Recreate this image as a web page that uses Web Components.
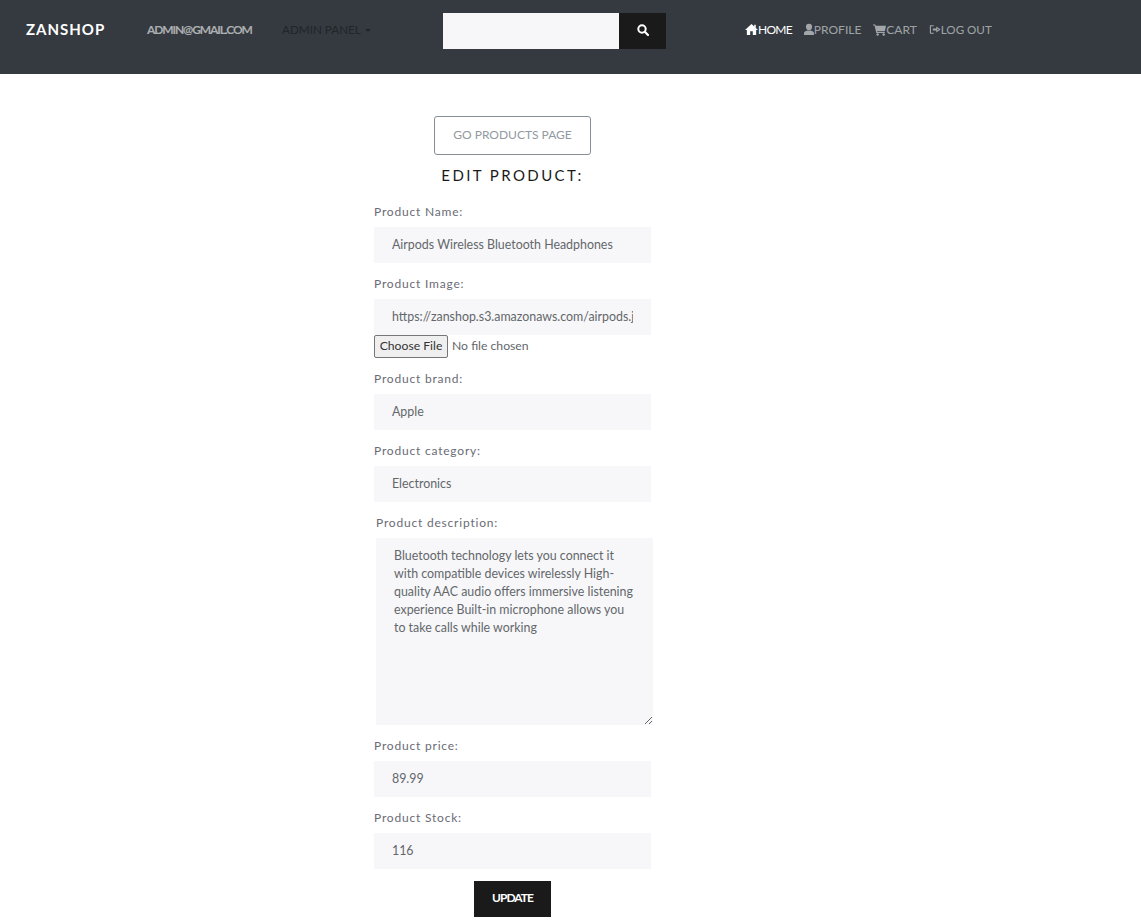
<!DOCTYPE html>
<html lang="en">
<head>
<meta charset="utf-8">
<title>Zanshop</title>
<style>
    html, body { margin: 0; padding: 0; background: #fff; }
    body { font-family: "Lato", "Noto Sans", sans-serif; }
</style>
</head>
<body>
<zan-navbar></zan-navbar>
<edit-product></edit-product>

<script>
// Navbar template
const templateNavbar = document.createElement('template');
templateNavbar.innerHTML = `
    <style>
        :host {
            display: flex;
            align-items: flex-start;
            height: 74px;
            box-sizing: border-box;
            padding-top: 13px;
            background-color: #343a40;
            font-family: "Lato", "Noto Sans", sans-serif;
            white-space: nowrap;
        }
        .item { height: 36px; line-height: 33px; font-size: 12px; }
        .brand {
            margin-left: 26px;
            width: 121px;
            color: #fff;
            font-size: 15px;
            font-weight: 700;
            letter-spacing: 1px;
        }
        .email { width: 135px; color: rgba(255,255,255,.6); font-weight: 700; letter-spacing: -1.1px; }
        .panel { width: 161px; color: #212529; font-size: 11.7px; }
        .panel::after {
            content: '';
            display: inline-block;
            margin-left: 4px;
            vertical-align: 2px;
            border-top: 3.5px solid;
            border-left: 3px solid transparent;
            border-right: 3px solid transparent;
        }
        form { display: flex; width: 223px; margin-right: 79px; }
        input {
            width: 176px;
            height: 36px;
            box-sizing: border-box;
            border: 0;
            padding: 0 18px;
            background: #f7f7f9;
        }
        button {
            width: 47px;
            height: 36px;
            border: 0;
            padding: 0 0 2px;
            display: flex;
            align-items: center;
            justify-content: center;
            background: #1a1a1a;
        }
        nav { display: flex; gap: 12px; }
        a {
            display: flex;
            align-items: center;
            height: 33px;
            color: rgba(255,255,255,.55);
            font-size: 12px;
            text-decoration: none;
        }
        a.active { color: #fff; letter-spacing: -.75px; }
        a svg { height: 13px; fill: currentColor; flex: none; }
        a .wide { width: 13px; }
        a .thin { width: 10px; }
        a .mid { width: 12px; }
        .logout { font-size: 11.6px; }
    </style>
    <div class="item brand">ZANSHOP</div>
    <div class="item email">ADMIN@GMAIL.COM</div>
    <div class="item panel">ADMIN PANEL</div>
    <form>
        <input type="text" aria-label="Search">
        <button type="button" aria-label="Search">
            <svg width="12" height="12" viewBox="0 0 12 12"><circle cx="5" cy="5" r="3.700" fill="none" stroke="#fff" stroke-width="2"/><path d="M7.800 7.800 11 11" stroke="#fff" stroke-width="2.200" stroke-linecap="round"/></svg>
        </button>
    </form>
    <nav>
        <a class="active" href="#"><svg class="wide" viewBox="0 0 14 14"><path d="M7 1 0 7.600h2V13h3.600V9h2.800v4H12V7.600h2L11.600 5.300V2H10v1.800z"/></svg>HOME</a>
        <a href="#"><svg class="thin" viewBox="0 0 11 14"><circle cx="5.500" cy="4.200" r="3.400"/><path d="M0 13v-1.800C0 9.400 1.800 8.400 3.500 8h4c1.700.4 3.500 1.400 3.500 3.200V13z"/></svg>PROFILE</a>
        <a href="#"><svg class="wide" viewBox="0 0 14 14"><path d="M0 1.500h2.500l.5 1.500h11l-1.200 5.800H4.300l.3 1h8v1.100H3.500L1.700 2.600H0z"/><circle cx="5" cy="12.400" r="1.300"/><circle cx="11.500" cy="12.400" r="1.300"/></svg>CART</a>
        <a class="logout" href="#"><svg class="mid" viewBox="0 0 14 14"><path d="M5.500 2H2.200C1.400 2 1 2.500 1 3.200v7.600c0 .7.400 1.200 1.200 1.200h3.300v-1.300H2.300V3.300h3.200z"/><path d="M8.500 3.500 13.500 7l-5 3.500V8.200H4.500V5.800h4zM9.700 5.900v2.200L11.400 7z" fill-rule="evenodd"/></svg>LOG OUT</a>
    </nav>
`;

class ZanNavbar extends HTMLElement {
    constructor() {
        super();
        this.attachShadow({ mode: 'open' });
        this.shadowRoot.appendChild(templateNavbar.content.cloneNode(true));
    }
}

// One label + input row of the form
const templateField = document.createElement('template');
templateField.innerHTML = `
    <style>
        :host { display: block; width: 277px; }
        label {
            display: block;
            height: 20px;
            padding: 11px 0 5px;
            line-height: 20px;
            font-size: 12px;
            letter-spacing: .8px;
            color: #6a6b75;
        }
        input {
            display: block;
            width: 100%;
            height: 36px;
            box-sizing: border-box;
            border: 0;
            padding: 0 18px 2px;
            background: #f7f7f9;
            color: #63676b;
            font: inherit;
            font-size: 12.4px;
            outline: none;
        }
    </style>
    <label for="f"></label>
    <input id="f" type="text">
    <slot></slot>
`;

class ProductField extends HTMLElement {
    constructor() {
        super();
        this.attachShadow({ mode: 'open' });
        this.shadowRoot.appendChild(templateField.content.cloneNode(true));
    }

    connectedCallback() {
        this.shadowRoot.querySelector('label').textContent = this.getAttribute('label');
        const input = this.shadowRoot.querySelector('input');
        input.value = this.getAttribute('value');
        input.setAttribute('value', this.getAttribute('value'));
    }
}

// Edit form
const templateEdit = document.createElement('template');
templateEdit.innerHTML = `
    <style>
        :host {
            display: block;
            width: 279px;
            margin-left: 374px;
            padding-top: 42px;
            font-family: "Lato", "Noto Sans", sans-serif;
        }
        .go {
            display: block;
            width: 157px;
            height: 39px;
            margin: 0 0 0 60px;
            padding: 0 0 2px;
            box-sizing: border-box;
            border: 1px solid #868e96;
            border-radius: 3px;
            background: #fff;
            color: #919aa1;
            font: inherit;
            font-size: 12px;
        }
        h1 {
            width: 277px;
            margin: 10px 0 0;
            height: 22px;
            line-height: 20px;
            text-align: center;
            font-size: 15px;
            font-weight: 400;
            letter-spacing: 2.4px;
            color: #1a1a1a;
        }
        .file {
            display: block;
            width: 277px;
            height: 23px;
            font-family: inherit;
            font-size: 12.2px;
            color: #63676b;
        }
        .file::file-selector-button {
            width: 74px;
            height: 23px;
            margin-right: 4px;
            padding: 0 0 2px;
            border: 1px solid #767676;
            border-radius: 2px;
            background: #efefef;
            color: #333;
            font: inherit;
            font-size: 12.2px;
        }
        .desc { margin-left: 2px; }
        .desc label {
            display: block;
            height: 20px;
            padding: 11px 0 5px;
            line-height: 20px;
            font-size: 12px;
            letter-spacing: .8px;
            color: #6a6b75;
        }
        textarea {
            display: block;
            width: 277px;
            height: 187px;
            box-sizing: border-box;
            border: 0;
            margin: 0;
            padding: 9px 18px;
            background: #f7f7f9;
            color: #63676b;
            font: inherit;
            font-size: 12.4px;
            line-height: 18px;
            outline: none;
        }
        .update {
            display: block;
            width: 77px;
            height: 36px;
            margin: 12px 0 0 100px;
            padding: 0 0 3px;
            border: 0;
            background: #1a1a1a;
            color: #fff;
            font: inherit;
            font-size: 12px;
            font-weight: 700;
            letter-spacing: -1px;
        }
        .first { margin-top: 4px; }
    </style>
    <button class="go" type="button">GO PRODUCTS PAGE</button>
    <h1>EDIT PRODUCT:</h1>
    <product-field class="first" label="Product Name:" value="Airpods Wireless Bluetooth Headphones"></product-field>
    <product-field label="Product Image:" value="https://zanshop.s3.amazonaws.com/airpods.jpg">
        <input class="file" type="file">
    </product-field>
    <product-field label="Product brand:" value="Apple"></product-field>
    <product-field label="Product category:" value="Electronics"></product-field>
    <div class="desc">
        <label for="d">Product description:</label>
        <textarea id="d">Bluetooth technology lets you connect it with compatible devices wirelessly High-quality AAC audio offers immersive listening experience Built-in microphone allows you to take calls while working</textarea>
    </div>
    <product-field label="Product price:" value="89.99"></product-field>
    <product-field label="Product Stock:" value="116"></product-field>
    <button class="update" type="button">UPDATE</button>
`;

class EditProduct extends HTMLElement {
    constructor() {
        super();
        this.attachShadow({ mode: 'open' });
        this.shadowRoot.appendChild(templateEdit.content.cloneNode(true));
    }
}

// Define the custom elements
customElements.define('zan-navbar', ZanNavbar);
customElements.define('product-field', ProductField);
customElements.define('edit-product', EditProduct);
</script>
</body>
</html>
